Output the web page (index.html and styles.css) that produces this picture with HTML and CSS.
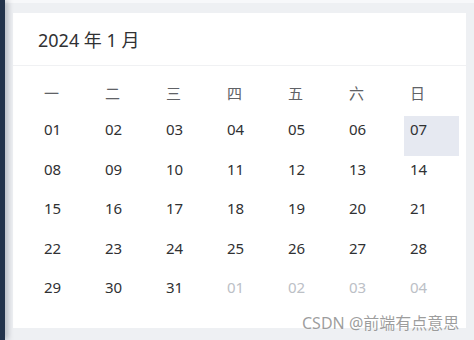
FILE: index.html
```html
<!DOCTYPE html>
<html lang="zh-CN">
<head>
<meta charset="utf-8">
<title>日历</title>
<link rel="stylesheet" href="styles.css">
</head>
<body>
<div class="app">
  <aside class="sidebar"></aside>
  <main class="main">
    <section class="calendar">
      <header class="cal-header">2024 年 1 月</header>
      <div class="cal-body">
        <div class="grid">
          <div class="wd">一</div><div class="wd">二</div><div class="wd">三</div><div class="wd">四</div><div class="wd">五</div><div class="wd">六</div><div class="wd">日</div>
          <div class="day">01</div><div class="day">02</div><div class="day">03</div><div class="day">04</div><div class="day">05</div><div class="day">06</div><div class="day selected">07</div>
          <div class="day">08</div><div class="day">09</div><div class="day">10</div><div class="day">11</div><div class="day">12</div><div class="day">13</div><div class="day">14</div>
          <div class="day">15</div><div class="day">16</div><div class="day">17</div><div class="day">18</div><div class="day">19</div><div class="day">20</div><div class="day">21</div>
          <div class="day">22</div><div class="day">23</div><div class="day">24</div><div class="day">25</div><div class="day">26</div><div class="day">27</div><div class="day">28</div>
          <div class="day">29</div><div class="day">30</div><div class="day">31</div><div class="day other">01</div><div class="day other">02</div><div class="day other">03</div><div class="day other">04</div>
        </div>
      </div>
    </section>
  </main>
  <div class="watermark">CSDN @前端有点意思</div>
</div>
</body>
</html>
```

FILE: styles.css
```css
html, body {
  margin: 0;
  padding: 0;
}
body {
  width: 474px;
  height: 340px;
  overflow: hidden;
  background: #eef0f3;
  font-family: "Noto Sans", "Noto Sans CJK SC", sans-serif;
}
.app {
  position: relative;
  display: flex;
  height: 340px;
}
.sidebar {
  width: 5px;
  flex: none;
  background: #22334b;
  box-shadow: 2px 0 6px rgba(0, 21, 41, 0.35);
  z-index: 1;
}
.main {
  flex: 1;
  border-top: 3px solid #f7f8fa;
  padding: 10px 8px 0 8px;
}
.calendar {
  width: 453px;
  height: 315px;
  background: #ffffff;
  box-sizing: border-box;
}
.cal-header {
  height: 53px;
  box-sizing: border-box;
  border-bottom: 1px solid #f0f1f3;
  padding: 0 25px;
  display: flex;
  align-items: center;
  font-size: 18px;
  color: #303133;
}
.cal-body {
  padding: 14px 0 0 25px;
}
.grid {
  display: grid;
  grid-template-columns: repeat(7, 55px);
  grid-template-rows: 36px repeat(5, 39.5px);
  column-gap: 6px;
}
.wd, .day {
  padding: 3px 6px;
  line-height: 20px;
  font-size: 15px;
}
.wd {
  color: #606266;
}
.day {
  color: #303133;
}
.day.other {
  color: #bcc0c6;
}
.day.selected {
  background: #e6e9f1;
}
.watermark {
  position: absolute;
  left: 302px;
  top: 312px;
  font-size: 16px;
  line-height: 22px;
  color: rgba(140, 140, 140, 0.85);
  text-shadow: 0 0 2px rgba(255, 255, 255, 0.6);
  white-space: nowrap;
}
```
